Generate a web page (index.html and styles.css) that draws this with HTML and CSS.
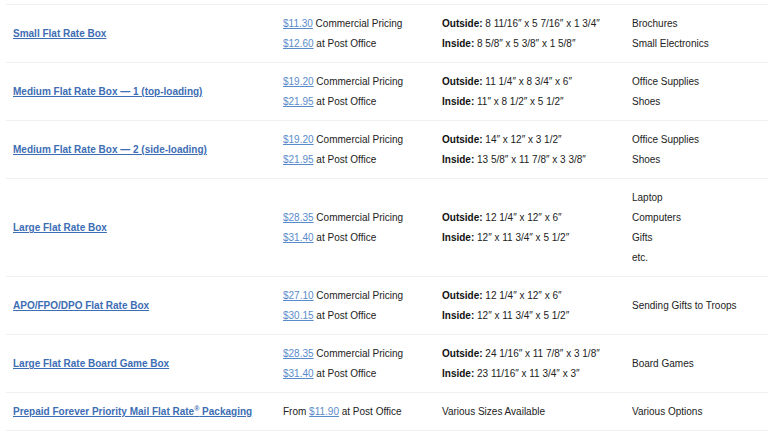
FILE: index.html
```html
<!DOCTYPE html>
<html lang="en">
<head>
<meta charset="utf-8">
<title>Flat Rate Boxes</title>
<link rel="stylesheet" href="styles.css">
</head>
<body>
<table class="rates">
  <tbody>
    <tr>
      <td class="name"><a href="#">Small Flat Rate Box</a></td>
      <td class="price"><div><a href="#">$11.30</a> Commercial Pricing</div><div><a href="#">$12.60</a> at Post Office</div></td>
      <td class="dims"><div><b>Outside:</b> 8 11/16″ x 5 7/16″ x 1 3/4″</div><div><b>Inside:</b> 8 5/8″ x 5 3/8″ x 1 5/8″</div></td>
      <td class="uses"><div>Brochures</div><div>Small Electronics</div></td>
    </tr>
    <tr>
      <td class="name"><a href="#">Medium Flat Rate Box — 1 (top-loading)</a></td>
      <td class="price"><div><a href="#">$19.20</a> Commercial Pricing</div><div><a href="#">$21.95</a> at Post Office</div></td>
      <td class="dims"><div><b>Outside:</b> 11 1/4″ x 8 3/4″ x 6″</div><div><b>Inside:</b> 11″ x 8 1/2″ x 5 1/2″</div></td>
      <td class="uses"><div>Office Supplies</div><div>Shoes</div></td>
    </tr>
    <tr>
      <td class="name"><a href="#">Medium Flat Rate Box — 2 (side-loading)</a></td>
      <td class="price"><div><a href="#">$19.20</a> Commercial Pricing</div><div><a href="#">$21.95</a> at Post Office</div></td>
      <td class="dims"><div><b>Outside:</b> 14″ x 12″ x 3 1/2″</div><div><b>Inside:</b> 13 5/8″ x 11 7/8″ x 3 3/8″</div></td>
      <td class="uses"><div>Office Supplies</div><div>Shoes</div></td>
    </tr>
    <tr>
      <td class="name"><a href="#">Large Flat Rate Box</a></td>
      <td class="price"><div><a href="#">$28.35</a> Commercial Pricing</div><div><a href="#">$31.40</a> at Post Office</div></td>
      <td class="dims"><div><b>Outside:</b> 12 1/4″ x 12″ x 6″</div><div><b>Inside:</b> 12″ x 11 3/4″ x 5 1/2″</div></td>
      <td class="uses"><div>Laptop</div><div>Computers</div><div>Gifts</div><div>etc.</div></td>
    </tr>
    <tr>
      <td class="name"><a href="#">APO/FPO/DPO Flat Rate Box</a></td>
      <td class="price"><div><a href="#">$27.10</a> Commercial Pricing</div><div><a href="#">$30.15</a> at Post Office</div></td>
      <td class="dims"><div><b>Outside:</b> 12 1/4″ x 12″ x 6″</div><div><b>Inside:</b> 12″ x 11 3/4″ x 5 1/2″</div></td>
      <td class="uses"><div>Sending Gifts to Troops</div></td>
    </tr>
    <tr>
      <td class="name"><a href="#">Large Flat Rate Board Game Box</a></td>
      <td class="price"><div><a href="#">$28.35</a> Commercial Pricing</div><div><a href="#">$31.40</a> at Post Office</div></td>
      <td class="dims"><div><b>Outside:</b> 24 1/16″ x 11 7/8″ x 3 1/8″</div><div><b>Inside:</b> 23 11/16″ x 11 3/4″ x 3″</div></td>
      <td class="uses"><div>Board Games</div></td>
    </tr>
    <tr>
      <td class="name"><a href="#">Prepaid Forever Priority Mail Flat Rate<sup>®</sup> Packaging</a></td>
      <td class="price"><div>From <a href="#">$11.90</a> at Post Office</div></td>
      <td class="dims"><div>Various Sizes Available</div></td>
      <td class="uses"><div>Various Options</div></td>
    </tr>
  </tbody>
</table>
</body>
</html>
```
FILE: styles.css
```css
html, body {
  margin: 0;
  padding: 0;
  background: #ffffff;
  overflow: hidden;
}

body {
  font-family: "Liberation Sans", Arial, sans-serif;
  font-size: 10px;
  color: #222222;
  padding: 4px 0 0 6px;
}

.rates {
  border-collapse: collapse;
  width: 790px;
  table-layout: fixed;
}

.rates td {
  border-top: 1px solid #eef0f4;
  border-bottom: 1px solid #eef0f4;
  padding: 9px 7px 8px;
  line-height: 20px;
  vertical-align: middle;
  text-align: left;
}

.rates td.name { width: 256px; }
.rates td.price { width: 145px; }
.rates td.dims { width: 176px; }

.name a {
  color: #3d6db4;
  font-weight: bold;
  font-size: 10px;
  text-decoration: underline;
}

.name sup {
  font-size: 7px;
  line-height: 0;
  vertical-align: 4px;
}

.price a {
  color: #5a8bcb;
  text-decoration: underline;
}

.dims b {
  font-weight: bold;
  color: #111111;
}
```
